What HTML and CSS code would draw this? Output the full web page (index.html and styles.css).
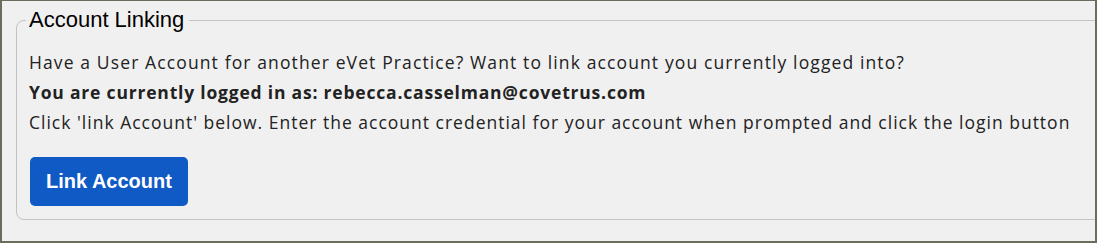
FILE: index.html
```html
<!DOCTYPE html>
<html lang="en">
<head>
    <meta charset="UTF-8">
    <title>Account Linking</title>
    <link rel="stylesheet" href="styles.css">
</head>
<body>

    <div class="frame">
        <fieldset class="linking">
            <legend>Account Linking</legend>
            <p class="intro">Have a User Account for another eVet Practice? Want to link account you currently logged into?</p>
            <p class="current">You are currently logged in as: rebecca.casselman@covetrus.com</p>
            <p>Click 'link Account' below. Enter the account credential for your account when prompted and click the login button</p>
            <button class="link-btn" type="button">Link Account</button>
        </fieldset>
    </div>

</body>
</html>
```

FILE: styles.css
```css
* {
    box-sizing: border-box;
}

html, body {
    margin: 0;
    height: 100%;
    overflow: hidden;
}

body {
    background: #f0f0f0;
    font-family: 'Open Sans', sans-serif;
}

.frame {
    height: 243px;
    border: 2px solid #6b6c5c;
    border-top-width: 1px;
    background: #f0f0f0;
    overflow: hidden;
    padding: 7px 0 0 14px;
}

.linking {
    margin: 0 -30px 0 0;
    padding: 15px 12px 13px 12px;
    border: 1px solid #c3c3c3;
    border-radius: 8px;
    min-width: 0;
}

.linking legend {
    margin-left: -3px;
    padding: 0 5px 0 3px;
    font-family: 'Liberation Sans', Arial, sans-serif;
    font-size: 22px;
    line-height: 24px;
    color: #000;
}

.linking p {
    margin: 0;
    font-size: 17.5px;
    line-height: 30px;
    letter-spacing: 1px;
    color: #222;
    white-space: nowrap;
}

.linking .intro {
    letter-spacing: 1.12px;
}

.linking .current {
    font-weight: bold;
    letter-spacing: 0.8px;
}

.link-btn {
    margin: 20px 0 0 1px;
    height: 49px;
    padding: 0 16px;
    background-color: #0f5ac4;
    color: #fff;
    border: none;
    border-radius: 5px;
    font-family: 'Liberation Sans', Arial, sans-serif;
    font-size: 20px;
    font-weight: bold;
    cursor: pointer;
}
```
